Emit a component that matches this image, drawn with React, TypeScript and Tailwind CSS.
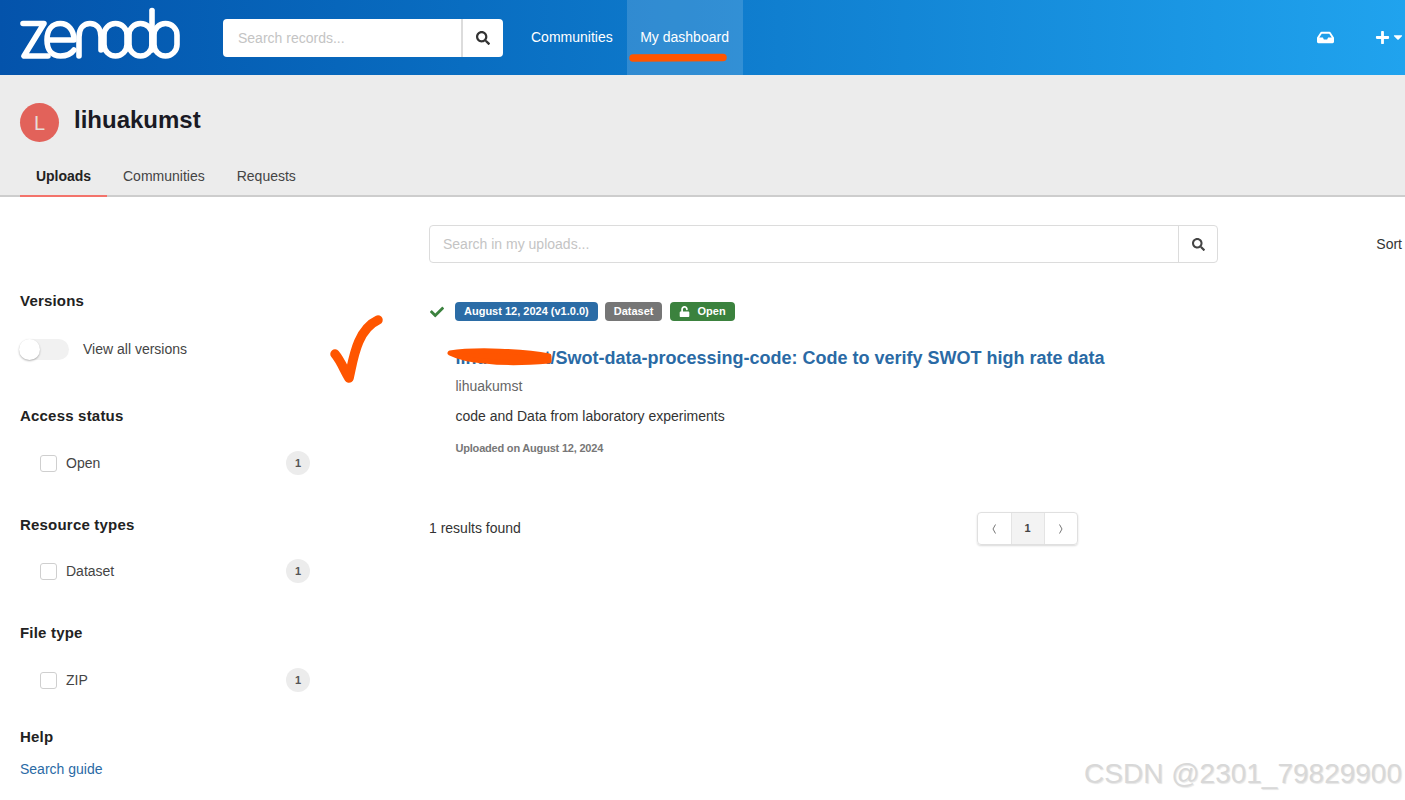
import React from "react";
import { FaSearch, FaInbox, FaPlus, FaCaretDown, FaCheck, FaUnlock } from "react-icons/fa";

function Logo() {
  return (
    <svg width="164" height="75" viewBox="18 0 164 75" className="block" fill="none" stroke="white" strokeWidth="5.600" strokeLinecap="round" strokeLinejoin="round">
      <path d="M23 23.500 H44 L24 56 H48" />
      <path d="M47 40 H74 C74 30 68 23.500 60.500 23.500 C52 23.500 47 30 47 40 C47 50 52 56 60.500 56 C66 56 71 54 74 50" />
      <path d="M79 56 V37 C79 28 84 23.500 90 23.500 C96 23.500 101 28 101 37 V50" />
      <rect x="104" y="23.500" width="23" height="32.500" rx="11.500" />
      <rect x="129" y="23.500" width="23" height="32.500" rx="11.500" />
      <path d="M152 10.500 V50" />
      <rect x="154" y="23.500" width="23" height="32.500" rx="11.500" />
    </svg>
  );
}

function FacetItem({ label }: { label: string }) {
  return (
    <div className="flex items-center h-6 pl-5 w-[290px]">
      <span className="w-[17px] h-[17px] rounded-[3px] border border-[#cfcfcf] bg-white" />
      <span className="ml-[9px] text-sm text-[#444]">{label}</span>
      <span className="ml-auto w-6 h-6 rounded-full bg-[#ececec] text-[#555] text-[11px] font-bold flex items-center justify-center">1</span>
    </div>
  );
}

function Heading({ children, className }: { children: React.ReactNode; className: string }) {
  return <h2 className={"text-[15px] leading-[18px] font-bold tracking-[0.2px] text-[#222] " + className}>{children}</h2>;
}

export default function App() {
  return (
    <div className="relative w-[1405px] h-[800px] overflow-hidden bg-white font-['Liberation_Sans',Arial,sans-serif]">
      <header className="h-[75px] flex items-center bg-linear-to-r from-[#0453ab] to-[#20a3ee]">
        <div className="ml-[18px] w-[205px] shrink-0"><Logo /></div>
        <div className="flex h-[38px] w-[280px] mt-[1px] rounded-[4px] bg-white overflow-hidden">
          <div className="flex-1 pl-[15px] text-sm leading-[38px] text-[#c4c4c4]">Search records...</div>
          <div className="w-[42px] border-l-2 border-[#dcdcdc] flex items-center justify-center text-[#333]"><FaSearch size={14} /></div>
        </div>
        <nav className="flex h-full ml-3 text-sm text-white whitespace-nowrap">
          <a className="pl-4 pr-[14px] flex items-center pb-[1px]">Communities</a>
          <a className="pl-[13.500px] w-[116px] flex items-center bg-white/15 pb-[1px]">My dashboard</a>
        </nav>
        <div className="ml-auto flex items-center text-white pb-[1px]">
          <FaInbox size={17} />
          <FaPlus size={15} className="ml-[41px]" />
          <FaCaretDown size={14} className="ml-[1px]" />
        </div>
      </header>

      <section className="h-[122px] bg-[#ececec] pl-5 relative flex flex-col">
        <div className="flex items-center pt-7">
          <div className="w-[39px] h-[39px] rounded-full bg-[#e2625a] text-[#e8dcd8] text-xl flex items-center justify-center">L</div>
          <h1 className="ml-[15px] mb-[6px] text-2xl font-bold text-[#1a1a24]">lihuakumst</h1>
        </div>
        <div className="mt-auto flex text-sm text-[#444] border-b-2 border-[#cdcdcd] -ml-5 pl-5">
          <a className="w-[87px] h-[41px] -mb-[2px] pt-[10px] text-center font-bold text-[#222] border-b-2 border-[#f3736b]">Uploads</a>
          <a className="ml-4 pt-[10px]">Communities</a>
          <a className="ml-8 pt-[10px]">Requests</a>
        </div>
      </section>

      <main className="flex">
        <aside className="w-[429px] shrink-0 pl-5">
          <Heading className="mt-[95px]">Versions</Heading>
          <div className="flex items-center mt-[29px] h-[21px] -ml-px">
            <span className="relative w-[50px] h-[21px] rounded-full bg-[#f1f1f1]">
              <span className="absolute left-0 top-0 w-[21px] h-[21px] rounded-full bg-white shadow-[0_1px_2px_rgba(0,0,0,0.3)]" />
            </span>
            <span className="ml-[14px] pb-[2px] text-sm text-[#444]">View all versions</span>
          </div>
          <Heading className="mt-[47px]">Access status</Heading>
          <div className="mt-[26px]"><FacetItem label="Open" /></div>
          <Heading className="mt-[41px]">Resource types</Heading>
          <div className="mt-[25px]"><FacetItem label="Dataset" /></div>
          <Heading className="mt-[41px]">File type</Heading>
          <div className="mt-[26px]"><FacetItem label="ZIP" /></div>
          <Heading className="mt-[36px]">Help</Heading>
          <a className="block mt-[13px] text-sm text-[#2a6aa5]">Search guide</a>
        </aside>

        <div className="flex-1 min-w-0">
          <div className="flex items-center mt-7">
            <div className="flex w-[789px] h-[38px] rounded-[4px] border border-[#dcdcdc]">
              <div className="flex-1 pl-[13px] text-sm leading-[36px] text-[#c4c4c4]">Search in my uploads...</div>
              <div className="w-[39px] border-l border-[#dcdcdc] flex items-center justify-center text-[#444]"><FaSearch size={13} /></div>
            </div>
            <span className="ml-auto mr-[3px] text-sm text-[#333]">Sort</span>
          </div>

          <article className="mt-[39px]">
            <div className="flex items-center h-[19px]">
              <FaCheck size={14} className="ml-[1px] text-[#3b823e]" />
              <span className="ml-[11px] h-[19px] px-[9px] rounded-[4px] bg-[#2b6ca6] text-white text-[11px] leading-[19px] font-bold">August 12, 2024 (v1.0.0)</span>
              <span className="ml-[7px] h-[19px] px-[9px] rounded-[4px] bg-[#767676] text-white text-[11px] leading-[19px] font-bold">Dataset</span>
              <span className="ml-[8px] h-[19px] pl-[9px] pr-[9px] rounded-[4px] bg-[#3b823e] text-white text-[11px] leading-[19px] font-bold flex items-center"><FaUnlock size={11} className="mr-[7px]" />Open</span>
            </div>
            <div className="pl-[26.500px]">
              <h3 className="mt-[26px] text-lg leading-[22px] font-bold text-[#2a6aa5]">lihuakumst/Swot-data-processing-code: Code to verify SWOT high rate data</h3>
              <p className="mt-[7px] text-sm leading-[20px] text-[#666]">lihuakumst</p>
              <p className="mt-[10px] text-sm leading-[20px] text-[#333]">code and Data from laboratory experiments</p>
              <p className="mt-[15px] text-[11px] leading-[14px] font-bold tracking-[-0.2px] text-[#777]">Uploaded on August 12, 2024</p>
            </div>
          </article>

          <div className="mt-[57px] relative flex items-center w-[649px] h-[33px]">
            <span className="pb-[1px] text-sm text-[#333]">1 results found</span>
            <div className="ml-auto flex h-[33px] w-[101px] rounded-[4px] border border-[#e0e0e0] shadow-[0_1px_2px_rgba(0,0,0,0.15)] text-[#444]">
              <span className="flex-1 flex items-center justify-center">
                <svg width="6" height="10" viewBox="0 0 6 10" fill="none" stroke="#777" strokeWidth="1"><path d="M4.500 0.500 L2 5 L4.500 9.500" /></svg>
              </span>
              <span className="w-[34px] bg-[#f3f3f3] border-x border-[#e4e4e4] flex items-center justify-center text-[11px] font-bold">1</span>
              <span className="flex-1 flex items-center justify-center">
                <svg width="6" height="10" viewBox="0 0 6 10" fill="none" stroke="#777" strokeWidth="1"><path d="M1.500 0.500 L4 5 L1.500 9.500" /></svg>
              </span>
            </div>
          </div>
        </div>
      </main>

      {/* hand-drawn annotations and watermark lying over the page */}
      <svg className="absolute left-0 top-0 pointer-events-none" width="1405" height="800" fill="none" strokeLinecap="round" strokeLinejoin="round">
        <path d="M633 58 L723 57.500" stroke="#ff5500" strokeWidth="7.500" />
        <path d="M335 354 C341 361 345 372 349 378 C353 362 356 330 378 320" stroke="#ff5500" strokeWidth="9.500" />
        <path d="M450 353 C475 349 525 351 549 356 L549 361 C525 363 500 363 485 361 C470 360 458 357 450 353 Z" fill="#ff5500" stroke="#ff5500" strokeWidth="5" />
      </svg>
      <div className="absolute right-[3px] top-[757px] text-[28px] leading-[34px] text-[#d8d8d8] [text-shadow:1px_1px_1px_rgba(0,0,0,0.1)] whitespace-nowrap">CSDN @2301_79829900</div>
    </div>
  );
}
